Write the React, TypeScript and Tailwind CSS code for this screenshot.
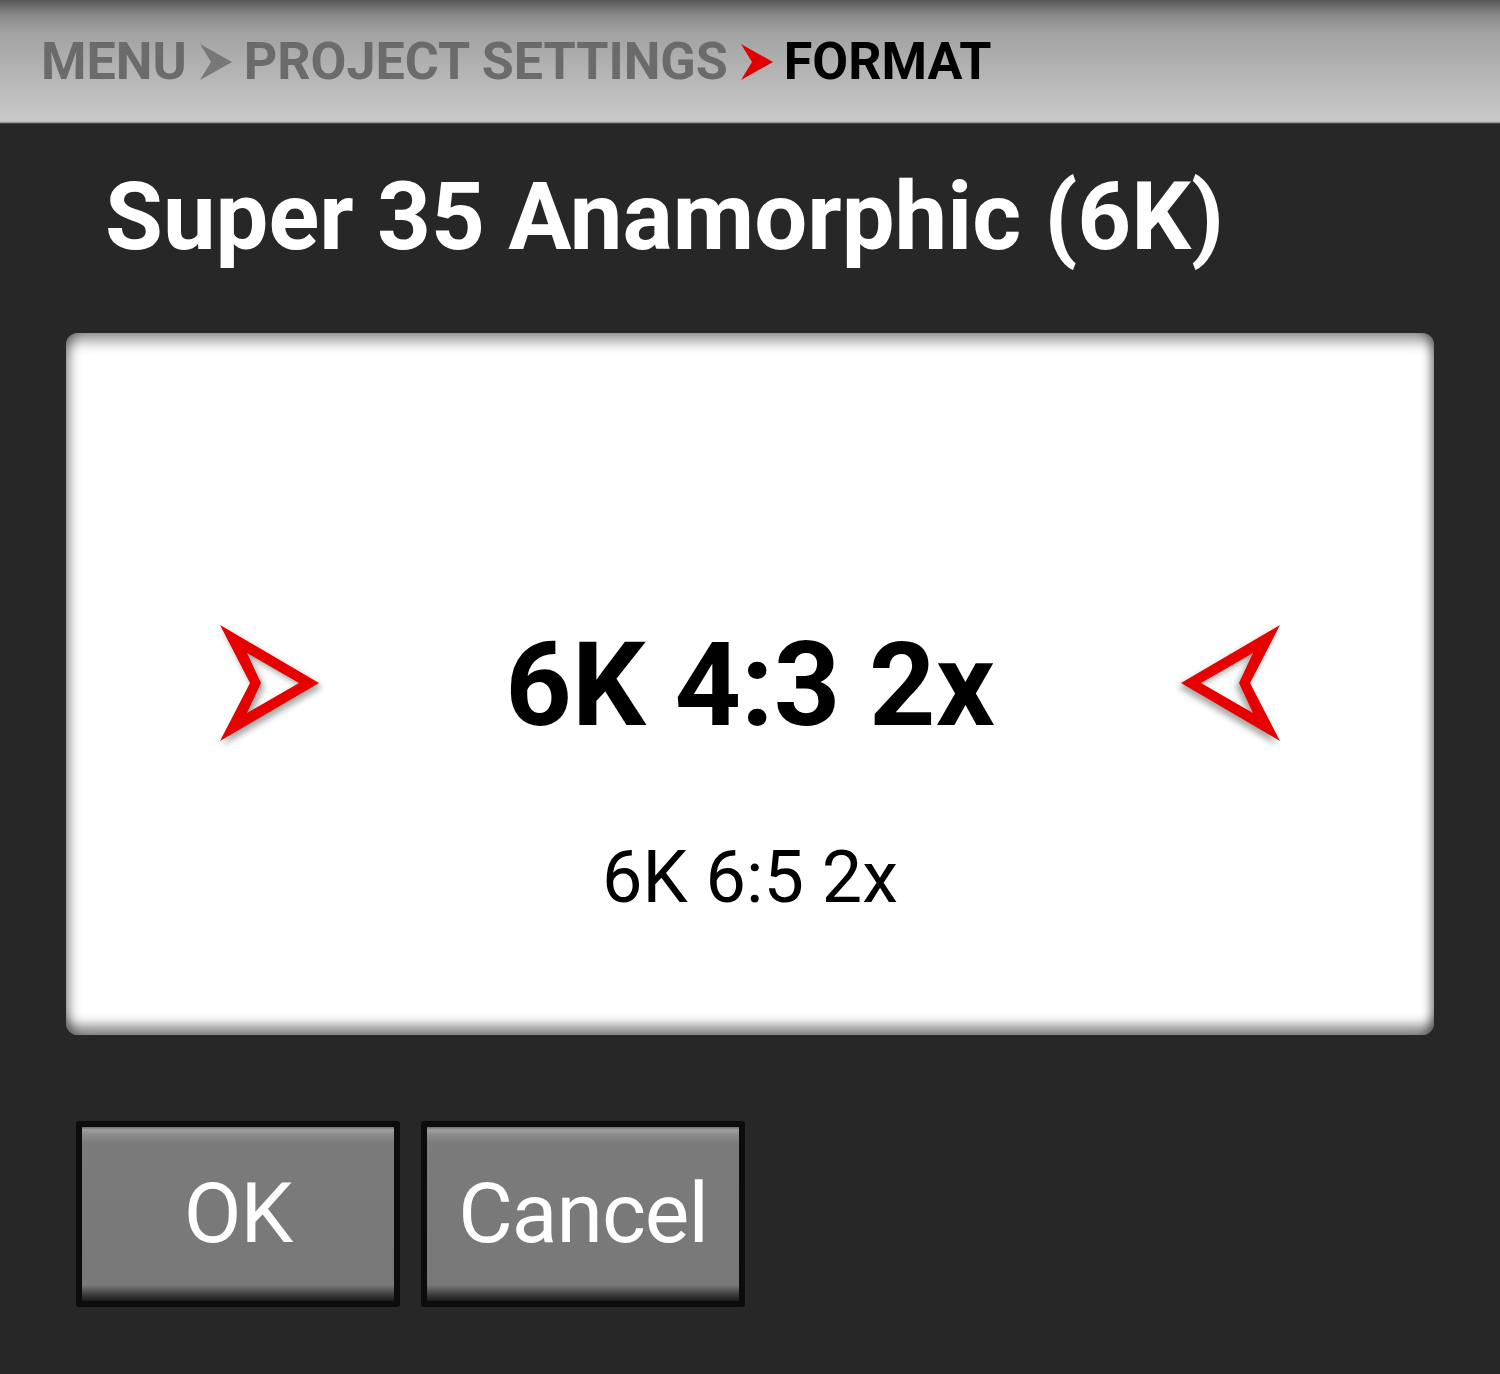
import React from 'react'

const font = { fontFamily: 'Roboto, "Liberation Sans", sans-serif' }

function Crumb({ red = false }: { red?: boolean }) {
  return (
    <svg width="32" height="36" viewBox="0 0 32 36" className="shrink-0">
      <polygon points="0,0 32,18 0,36 11,18" fill={red ? '#e30000' : '#787878'} />
    </svg>
  )
}

// big red outline arrowhead on the selector card, pointing right by default
function Pointer({ flip = false }: { flip?: boolean }) {
  return (
    <svg
      width="100"
      height="116"
      viewBox="0 0 100 116"
      className={`shrink-0 drop-shadow-[3px_4px_3px_rgba(0,0,0,0.35)] ${flip ? '-scale-x-100' : ''}`}
    >
      <path
        fillRule="evenodd"
        d="M0 0 L99 58 L0 116 L30 58 Z M27 28 L41 58 L27 88 L79 58 Z"
        fill="#e60000"
      />
    </svg>
  )
}

function Button({ label }: { label: string }) {
  return (
    <div className="w-[324px] h-[186px] bg-[#0c0c0c] rounded-[3px] p-[6px] flex">
      <div className="flex-1 flex items-center justify-center bg-[linear-gradient(to_bottom,#6e6e6e_0px,#a0a0a0_3px,#8a8a8a_8px,#7b7b7b_16px,#787878_158px,#3a3a3a_168px,#111111_176px)]">
        <span className="text-[84px] leading-none text-white tracking-[-1px]">{label}</span>
      </div>
    </div>
  )
}

export default function App() {
  return (
    <div className="w-[1500px] h-[1374px] bg-[#272727] flex flex-col overflow-hidden" style={font}>
      {/* breadcrumb bar */}
      <div className="h-[124px] shrink-0 flex items-center pl-[41px] bg-[linear-gradient(to_bottom,#575757_0px,#8c8c8c_16px,#a3a3a3_34px,#c9c9c9_120px,#bdbdbd_122px,#1c1c1c_124px)]">
        <span className="text-[52px] leading-none font-bold text-[#6b6b6b]">MENU</span>
        <span className="ml-[13px] mr-[12px]"><Crumb /></span>
        <span className="text-[52px] leading-none font-bold text-[#6b6b6b]">PROJECT SETTINGS</span>
        <span className="ml-[13px] mr-[11px]"><Crumb red /></span>
        <span className="text-[52px] leading-none font-bold text-black">FORMAT</span>
      </div>

      <div className="pl-[105px] mt-[46px] text-[94px] leading-none font-bold text-white">
        Super 35 Anamorphic (6K)
      </div>

      {/* selector card */}
      <div className="mt-[69px] mx-[66px] h-[702px] shrink-0 rounded-[12px] bg-white flex flex-col items-center pt-[292px] shadow-[inset_0_16px_14px_-8px_rgba(0,0,0,0.42),inset_12px_0_12px_-8px_rgba(0,0,0,0.38),inset_-10px_0_10px_-6px_rgba(0,0,0,0.4),inset_0_-16px_12px_-6px_rgba(0,0,0,0.45)]">
        <div className="w-full h-[116px] flex items-center justify-between px-[154px]">
          <Pointer />
          <span className="pt-[4px] text-[116px] leading-none font-bold text-black">6K 4:3 2x</span>
          <Pointer flip />
        </div>
        <div className="mt-[101px] text-[72px] leading-none text-black">6K 6:5 2x</div>
      </div>

      <div className="mt-[86px] pl-[76px] flex gap-[21px]">
        <Button label="OK" />
        <Button label="Cancel" />
      </div>
    </div>
  )
}
